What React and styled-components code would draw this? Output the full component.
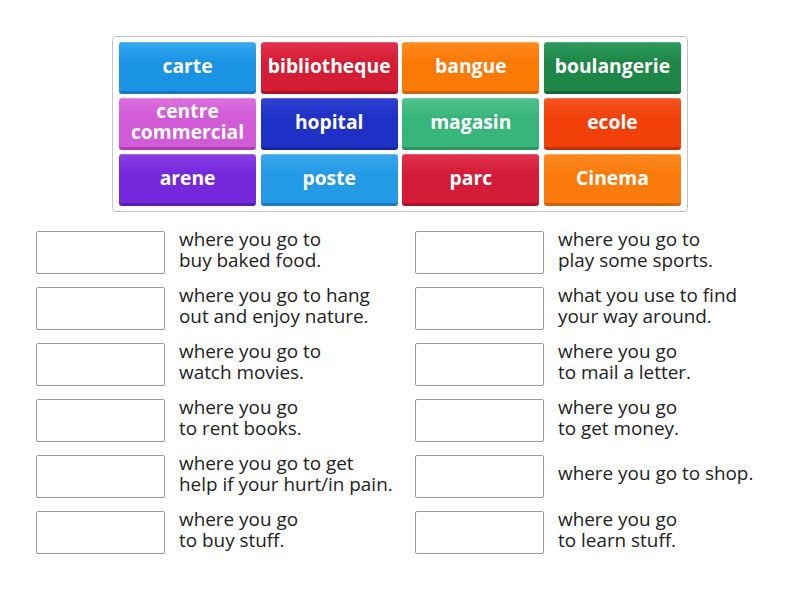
import React from 'react'
import styled, { createGlobalStyle } from 'styled-components'

const GlobalStyle = createGlobalStyle`
  body {
    margin: 0;
    background: #fff;
    font-family: "Open Sans", "Noto Sans", sans-serif;
  }
`

const tiles = [
  { label: 'carte', top: '#35aaf2', base: '#1b93e4', edge: '#1277c4' },
  { label: 'bibliotheque', top: '#e2334a', base: '#d41d35', edge: '#ad1327' },
  { label: 'bangue', top: '#fd8a1f', base: '#fb7a06', edge: '#d4620a' },
  { label: 'boulangerie', top: '#2a9a5a', base: '#1e8748', edge: '#156a37' },
  { label: ['centre', 'commercial'], top: '#dc70e0', base: '#d15ad6', edge: '#ad3fb3' },
  { label: 'hopital', top: '#2f41d3', base: '#1f30c6', edge: '#1624a0' },
  { label: 'magasin', top: '#4fc28c', base: '#38b57a', edge: '#2a9462' },
  { label: 'ecole', top: '#f65620', base: '#f2400a', edge: '#c63206' },
  { label: 'arene', top: '#8740e4', base: '#7628dc', edge: '#5d1bb6' },
  { label: 'poste', top: '#3aa8ec', base: '#249ae6', edge: '#177cc2' },
  { label: 'parc', top: '#e2334c', base: '#d41c38', edge: '#ad1229' },
  { label: 'Cinema', top: '#fd8a22', base: '#fb7b0c', edge: '#d4620a' },
]

const left = [
  ['where you go to', 'buy baked food.'],
  ['where you go to hang', 'out and enjoy nature.'],
  ['where you go to', 'watch movies.'],
  ['where you go', 'to rent books.'],
  ['where you go to get', 'help if your hurt/in pain.'],
  ['where you go', 'to buy stuff.'],
]

const right = [
  ['where you go to', 'play some sports.'],
  ['what you use to find', 'your way around.'],
  ['where you go', 'to mail a letter.'],
  ['where you go', 'to get money.'],
  ['where you go to shop.'],
  ['where you go', 'to learn stuff.'],
]

function Prompt({ lines }) {
  return (
    <Row>
      <DropBox />
      <Clue>
        {lines.map((l, i) => (
          <span key={i}>{l}</span>
        ))}
      </Clue>
    </Row>
  )
}

export default function App() {
  return (
    <Page>
      <GlobalStyle />
      <Bank>
        {tiles.map((t, i) => (
          <Tile key={i} $top={t.top} $base={t.base} $edge={t.edge}>
            {Array.isArray(t.label)
              ? t.label.map((l, j) => <span key={j}>{l}</span>)
              : t.label}
          </Tile>
        ))}
      </Bank>
      <Answers>
        <Column>
          {left.map((lines, i) => (
            <Prompt key={i} lines={lines} />
          ))}
        </Column>
        <Column>
          {right.map((lines, i) => (
            <Prompt key={i} lines={lines} />
          ))}
        </Column>
      </Answers>
    </Page>
  )
}

const Page = styled.div`
  width: 800px;
  height: 600px;
  padding-top: 36px;
  box-sizing: border-box;
`

const Bank = styled.div`
  margin-left: 112px;
  width: 576px;
  box-sizing: border-box;
  border: 1px solid #c4c4c4;
  border-radius: 4px;
  padding: 5px 6px;
  display: grid;
  grid-template-columns: repeat(4, 1fr);
  grid-auto-rows: 52px;
  gap: 4px 4.5px;
`

const Tile = styled.div`
  box-sizing: border-box;
  border-radius: 3px;
  background: linear-gradient(to bottom, ${p => p.$top}, ${p => p.$base} 40%);
  border-bottom: 3px solid ${p => p.$edge};
  box-shadow: inset 0 1px 0 rgba(255, 255, 255, 0.2);
  color: #fff;
  font-weight: 700;
  font-size: 19.3px;
  line-height: 21px;
  display: flex;
  flex-direction: column;
  align-items: center;
  justify-content: center;
  text-align: center;
  padding-bottom: 3px;
  white-space: nowrap;
`

const Answers = styled.div`
  display: grid;
  grid-template-columns: 365px 365px;
  column-gap: 14px;
  margin-left: 36px;
  margin-top: 19px;
`

const Column = styled.div`
  display: flex;
  flex-direction: column;
  gap: 13px;
`

const Row = styled.div`
  display: flex;
  align-items: center;
  gap: 14px;
`

const DropBox = styled.div`
  flex: none;
  width: 129px;
  height: 43px;
  box-sizing: border-box;
  border: 1px solid #9a9a9a;
  border-radius: 2px;
  background: #fff;
`

const Clue = styled.div`
  display: flex;
  flex-direction: column;
  font-size: 18.9px;
  line-height: 21px;
  color: #222;
  margin-top: -6px;
`
